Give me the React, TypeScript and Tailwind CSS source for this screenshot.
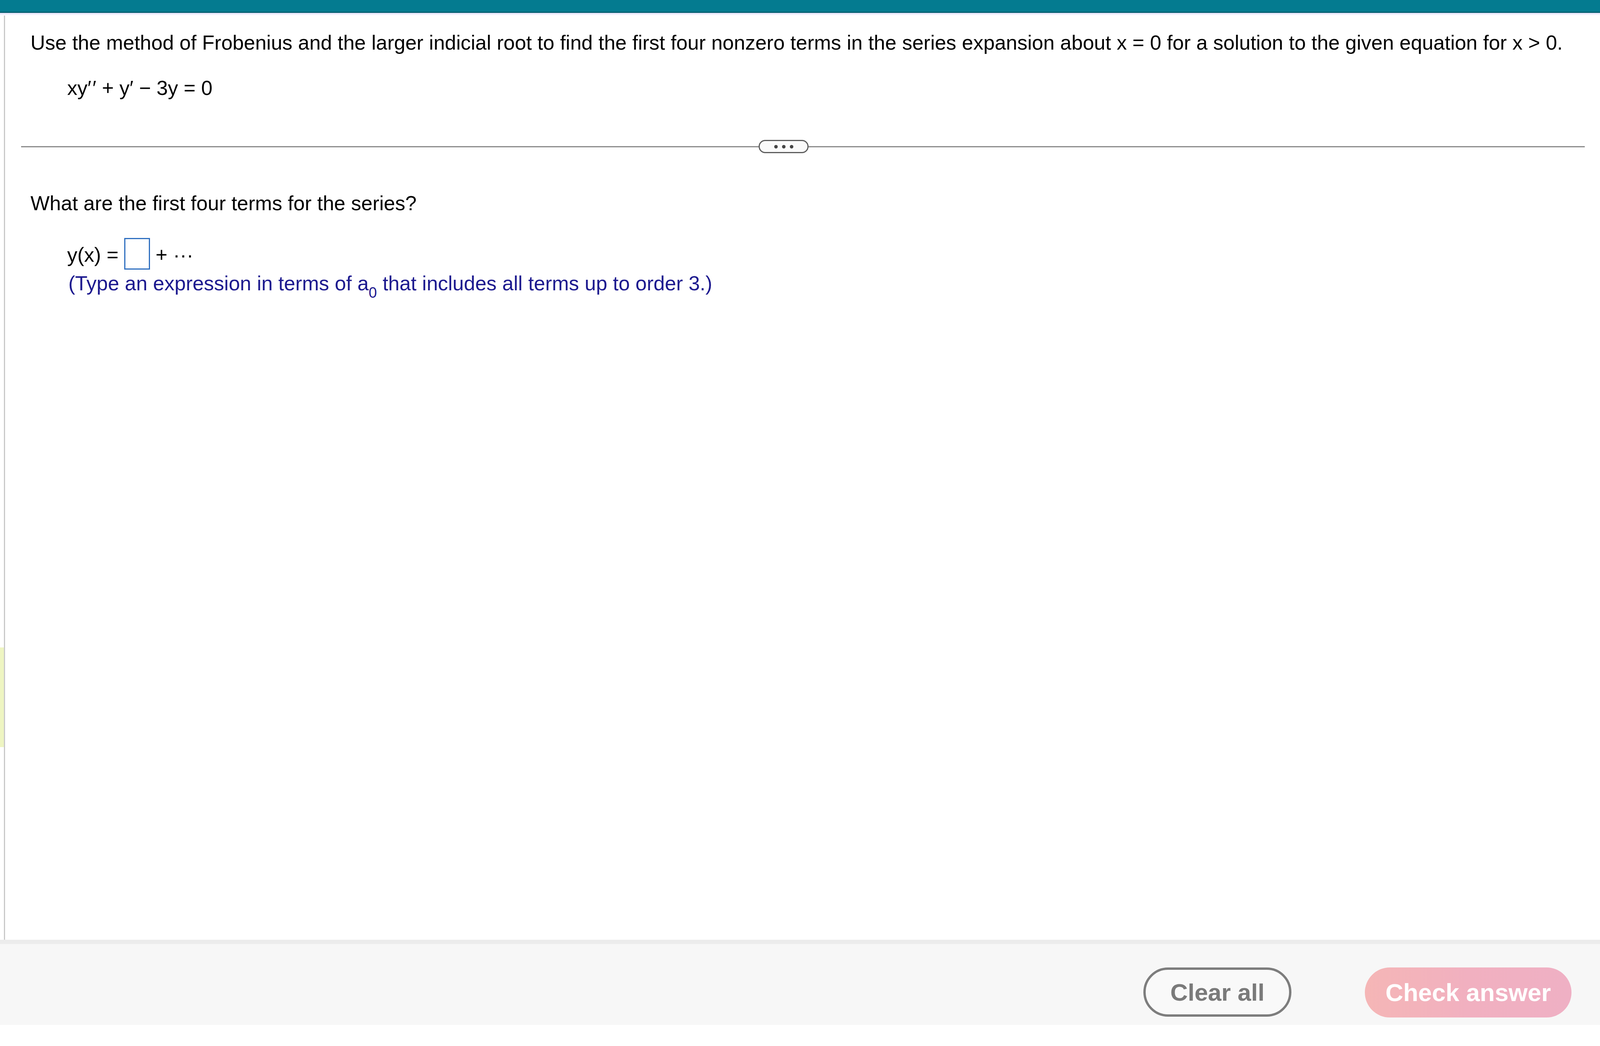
export default function App() {
  return (
    <div className="flex h-[2677px] w-full flex-col overflow-hidden bg-white font-['Liberation_Sans',Arial,sans-serif] text-black">
      <div className="h-[33px] shrink-0 border-b-[3px] border-[#05606f] bg-[#047b90]" />
      <div className="h-[7px] shrink-0 bg-linear-to-b from-[#e4e0fa] to-white" />

      <div className="flex min-h-0 flex-1">
        {/* left gutter with the yellow marker */}
        <div className="flex w-[10px] shrink-0 flex-col">
          <div className="mt-[1617px] h-[255px] bg-[#eef5c2]" />
        </div>
        <div className="w-[3px] shrink-0 bg-[#c9c9c9]" />

        <main className="min-w-0 flex-1 pl-[41px] pr-[39px]">
          <p className="mt-[39px] pl-[24px] text-[52px] leading-[60px]">
            Use the method of Frobenius and the larger indicial root to find the first four nonzero terms in the series
            expansion about x = 0 for a solution to the given equation for x &gt; 0.
          </p>
          <p className="mt-[56px] pl-[118px] text-[52px] leading-[60px]">
            xy′<span className="ml-[3px]">′</span> + y′ − 3y = 0
          </p>

          <div className="mt-[103px] flex h-[34px] items-center">
            <div className="h-[3px] flex-[2179] bg-[#8a8a8a]" />
            <button className="flex h-[34px] w-[128px] shrink-0 items-center justify-center gap-[11px] rounded-full border-[3px] border-[#5c5c5c] bg-[#fafafa]">
              <span className="h-[9px] w-[9px] rounded-full bg-[#444]" />
              <span className="h-[9px] w-[9px] rounded-full bg-[#444]" />
              <span className="h-[9px] w-[9px] rounded-full bg-[#444]" />
            </button>
            <div className="h-[3px] flex-[2293] bg-[#8a8a8a]" />
          </div>

          <p className="mt-[98px] pl-[24px] text-[52px] leading-[60px]">What are the first four terms for the series?</p>

          <div className="mt-[59px] flex items-start pl-[118px] text-[52px] leading-[60px]">
            <span className="mt-[13px] whitespace-pre">y(x) = </span>
            <span className="h-[81px] w-[66px] border-[3px] border-[#2f6fc0] bg-white" />
            <span className="mt-[13px] whitespace-pre"> + ···</span>
          </div>

          <p className="mt-[5px] pl-[121px] text-[52px] leading-[60px] text-[#1d1a8f]">
            (Type an expression in terms of a<span className="relative top-[19px] text-[38px] leading-none">0</span> that
            includes all terms up to order 3.)
          </p>
        </main>
      </div>

      <footer className="shrink-0">
        <div className="h-[11px] bg-[#ececec]" />
        <div className="flex h-[207px] items-start justify-end gap-[188px] bg-[#f7f7f7] pr-[73px] pt-[60px]">
          <button className="flex h-[126px] w-[379px] items-center justify-center rounded-full border-[6px] border-[#7d7d7d] bg-[#f9f9f9] text-[62px] font-bold text-[#7a7a7a]">
            Clear all
          </button>
          <button className="flex h-[128px] w-[529px] items-center justify-center rounded-full bg-linear-to-r from-[#f5b6b6] via-[#f1b0c0] to-[#efb0c4] text-[63px] font-bold text-white">
            Check answer
          </button>
        </div>
        <div className="h-[54px] bg-white" />
      </footer>
    </div>
  );
}
